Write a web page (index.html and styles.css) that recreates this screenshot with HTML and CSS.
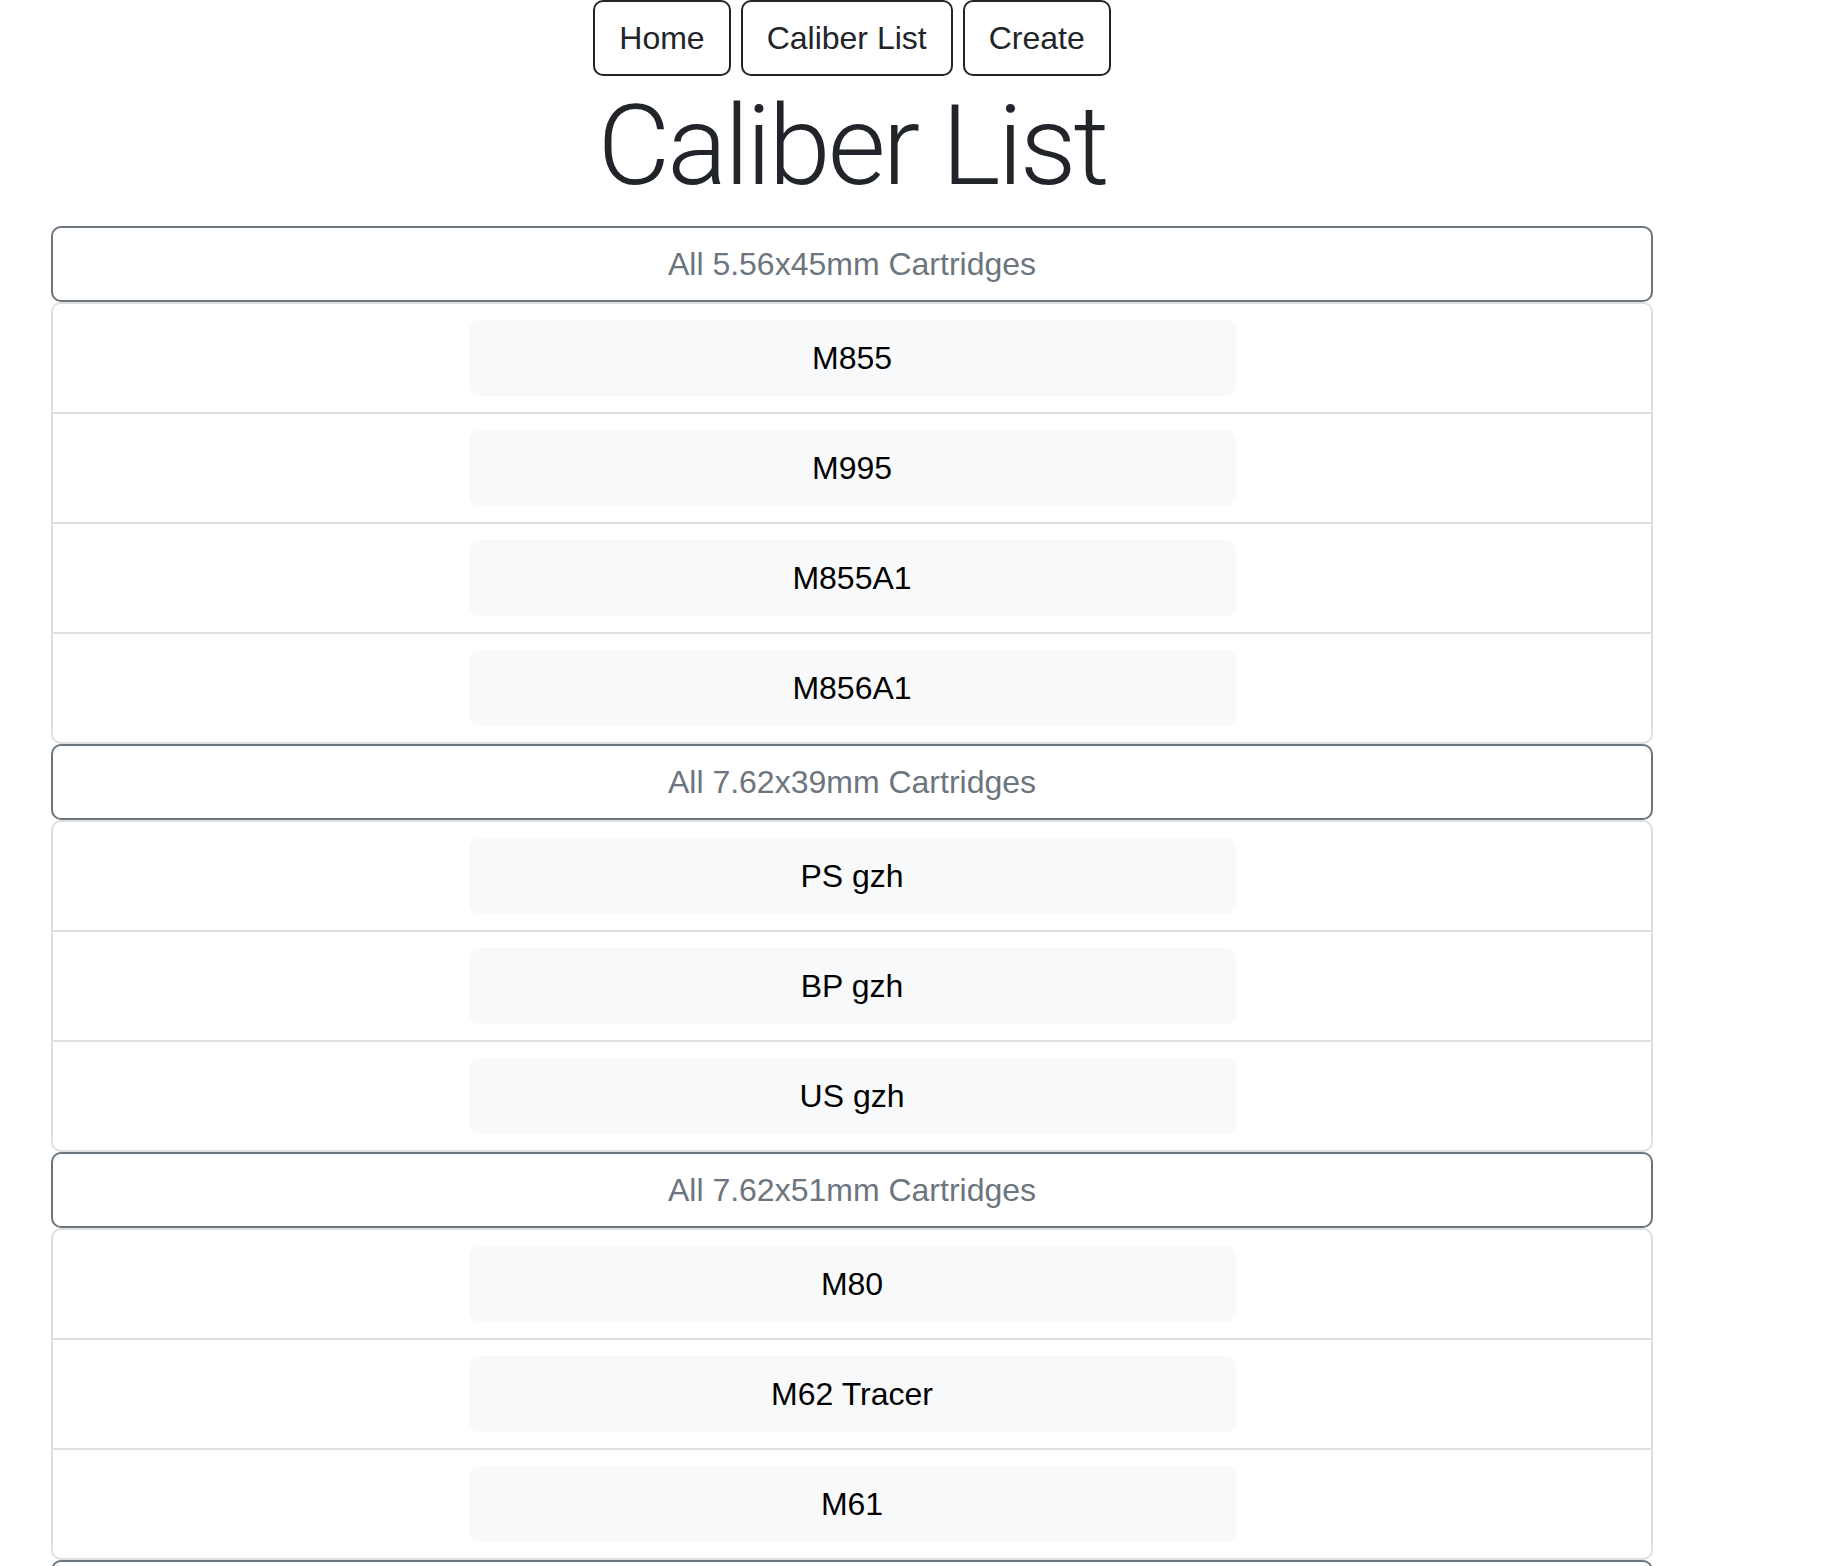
FILE: index.html
```html
<!DOCTYPE html>
<html lang="en">
<head>
<meta charset="utf-8">
<title>Caliber List</title>
<link rel="stylesheet" href="styles.css">
</head>
<body>
<div class="page">
  <nav class="nav">
    <a class="nav-btn" href="#">Home</a>
    <a class="nav-btn" href="#">Caliber List</a>
    <a class="nav-btn" href="#">Create</a>
  </nav>
  <h1 class="title">Caliber List</h1>

  <section class="group">
    <a class="group-head" href="#">All 5.56x45mm Cartridges</a>
    <ul class="list">
      <li class="row"><a class="item" href="#">M855</a></li>
      <li class="row"><a class="item" href="#">M995</a></li>
      <li class="row"><a class="item" href="#">M855A1</a></li>
      <li class="row"><a class="item" href="#">M856A1</a></li>
    </ul>
  </section>

  <section class="group">
    <a class="group-head" href="#">All 7.62x39mm Cartridges</a>
    <ul class="list">
      <li class="row"><a class="item" href="#">PS gzh</a></li>
      <li class="row"><a class="item" href="#">BP gzh</a></li>
      <li class="row"><a class="item" href="#">US gzh</a></li>
    </ul>
  </section>

  <section class="group">
    <a class="group-head" href="#">All 7.62x51mm Cartridges</a>
    <ul class="list">
      <li class="row"><a class="item" href="#">M80</a></li>
      <li class="row"><a class="item" href="#">M62 Tracer</a></li>
      <li class="row"><a class="item" href="#">M61</a></li>
    </ul>
  </section>

  <section class="group">
    <a class="group-head" href="#">All 7.62x54mmR Cartridges</a>
    <ul class="list">
      <li class="row"><a class="item" href="#">7N1</a></li>
    </ul>
  </section>
</div>
</body>
</html>
```

FILE: styles.css
```css
* {
  box-sizing: border-box;
}

html, body {
  margin: 0;
  padding: 0;
  background: #ffffff;
}

body {
  font-family: "Liberation Sans", Arial, sans-serif;
  color: #212529;
}

.page {
  width: 1602px;
  margin-left: 51px;
}

.nav {
  display: flex;
  justify-content: center;
  gap: 10px;
  padding-top: 0;
}

.nav-btn {
  display: block;
  font-size: 32px;
  line-height: 48px;
  padding: 12px 24px;
  border: 2px solid #212529;
  border-radius: 10px;
  color: #212529;
  text-decoration: none;
}

.title {
  margin: 0;
  padding-bottom: 10px;
  text-align: center;
  font-family: Roboto, "Liberation Sans", sans-serif;
  font-weight: 300;
  font-size: 112px;
  line-height: 140px;
  letter-spacing: -3px;
  color: #212529;
}

.group-head {
  display: block;
  font-size: 32px;
  line-height: 48px;
  padding: 12px 24px;
  border: 2px solid #6c757d;
  border-radius: 10px;
  color: #6c757d;
  text-align: center;
  text-decoration: none;
}

.list {
  list-style: none;
  margin: 0;
  padding: 0;
  border: 2px solid #dfdfdf;
  border-radius: 10px;
}

.row {
  padding: 16px 32px;
  display: flex;
  justify-content: center;
}

.row + .row {
  border-top: 2px solid #dfdfdf;
}

.item {
  display: block;
  width: 50%;
  font-size: 32px;
  line-height: 48px;
  padding: 12px 24px;
  border: 2px solid #f8f9fa;
  border-radius: 10px;
  background: #f8f9fa;
  color: #000000;
  text-align: center;
  text-decoration: none;
}
```
